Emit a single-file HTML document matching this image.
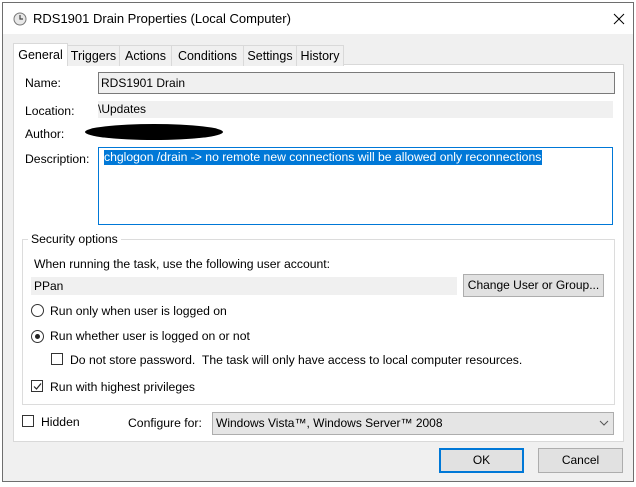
<!DOCTYPE html><html><head><style>
body{margin:0;width:636px;height:487px;background:#fff;position:relative;overflow:hidden;font-family:"Liberation Sans",sans-serif;font-size:12px;color:#000}
.a{position:absolute}
.win{left:2px;top:2px;width:630px;height:478px;border:1px solid #6e6e6e;background:#f0f0f0}
.title{left:0;top:0;width:630px;height:31px;background:#fff}
.tab{top:42px;height:20px;border:1px solid #d9d9d9;border-bottom:none;background:#f0f0f0;text-align:center;line-height:20px;font-size:12.5px}
.panel{left:10px;top:61px;width:609px;height:376px;background:#fff;border:1px solid #d9d9d9}
.lbl{font-size:12.2px}
.btn{background:#e1e1e1;border:1px solid #adadad;text-align:center;box-sizing:border-box}
.cb{width:12px;height:12px;border:1px solid #333;background:#fff;box-sizing:border-box}
.rb{width:13px;height:13px;border:1px solid #333;border-radius:50%;background:#fff;box-sizing:border-box}
</style></head><body>
<div class="a win">
 <div class="a title">
  <svg class="a" style="left:10px;top:9px" width="14" height="14" viewBox="0 0 14 14"><circle cx="7" cy="7" r="6" fill="#e8e8e8" stroke="#777"/><path d="M7 3v4h3" stroke="#444" fill="none" stroke-width="1.2"/></svg>
  <div class="a" style="left:30px;top:8px;font-size:13px">RDS1901 Drain Properties (Local Computer)</div>
  <svg class="a" style="left:610px;top:10px" width="12" height="12"><path d="M1 1L11 11M11 1L1 11" stroke="#000" stroke-width="1"/></svg>
 </div>
 <div class="a panel"></div>
 <div class="a tab" style="left:10px;top:40px;width:53px;height:22px;background:#fff;line-height:22px;z-index:2">General</div>
 <div class="a tab" style="left:64px;width:51px">Triggers</div>
 <div class="a tab" style="left:116px;width:51px">Actions</div>
 <div class="a tab" style="left:168px;width:71px">Conditions</div>
 <div class="a tab" style="left:240px;width:52px">Settings</div>
 <div class="a tab" style="left:293px;width:46px">History</div>
</div>
<div class="a lbl" style="left:25px;top:76px">Name:</div>
<div class="a" style="left:98px;top:72px;width:513px;height:20px;border:1px solid #7a7a7a;background:#f0f0f0;line-height:20px;padding-left:2px">RDS1901 Drain</div>
<div class="a lbl" style="left:25px;top:104px">Location:</div>
<div class="a" style="left:98px;top:101px;width:515px;height:17px;background:#f0f0f0;line-height:16px">\Updates</div>
<div class="a lbl" style="left:25px;top:127px">Author:</div>
<div class="a" style="left:85px;top:124px;width:138px;height:16px;border-radius:50%;background:#000"></div>
<div class="a lbl" style="left:25px;top:152px">Description:</div>
<div class="a" style="left:98px;top:147px;width:513px;height:76px;border:1px solid #0078d7;background:#fff"></div>
<div class="a" style="left:104px;top:150px;height:15px;background:#0078d7;color:#fff;line-height:15px;padding-right:1px;font-size:12.2px">chglogon /drain -&gt; no remote new connections will be allowed only reconnections</div>
<div class="a" style="left:22px;top:239px;width:591px;height:164px;border:1px solid #dcdcdc"></div>
<div class="a lbl" style="left:28px;top:232px;background:#fff;padding:0 3px">Security options</div>
<div class="a lbl" style="left:34px;top:257px">When running the task, use the following user account:</div>
<div class="a" style="left:31px;top:277px;width:423px;height:18px;background:#f0f0f0;line-height:18px;padding-left:3px">PPan</div>
<div class="a btn" style="left:463px;top:274px;width:141px;height:23px;line-height:21px">Change User or Group...</div>
<div class="a rb" style="left:31px;top:304px"></div>
<div class="a lbl" style="left:50px;top:304px">Run only when user is logged on</div>
<div class="a rb" style="left:31px;top:330px"></div><div class="a" style="left:35px;top:334px;width:5px;height:5px;border-radius:50%;background:#222"></div>
<div class="a lbl" style="left:50px;top:329px">Run whether user is logged on or not</div>
<div class="a cb" style="left:51px;top:353px"></div>
<div class="a lbl" style="left:70px;top:353px">Do not store password.&nbsp; The task will only have access to local computer resources.</div>
<div class="a cb" style="left:31px;top:380px"></div>
<svg class="a" style="left:32px;top:381px" width="11" height="11"><path d="M2 5.5L4.5 8L9 2.5" stroke="#222" fill="none" stroke-width="1.2"/></svg>
<div class="a lbl" style="left:50px;top:380px">Run with highest privileges</div>
<div class="a cb" style="left:22px;top:415px"></div>
<div class="a lbl" style="left:41px;top:415px">Hidden</div>
<div class="a lbl" style="left:128px;top:416px">Configure for:</div>
<div class="a" style="left:212px;top:412px;width:397px;height:21px;border:1px solid #adadad;background:#e5e5e5;line-height:21px;padding-left:3px">Windows Vista™, Windows Server™ 2008</div>
<svg class="a" style="left:599px;top:419px" width="10" height="8"><path d="M1 2L5 6L9 2" stroke="#555" fill="none"/></svg>
<div class="a btn" style="left:439px;top:448px;width:85px;height:25px;border:2px solid #0078d7;line-height:21px">OK</div>
<div class="a btn" style="left:538px;top:448px;width:85px;height:25px;line-height:23px">Cancel</div>
</body></html>
